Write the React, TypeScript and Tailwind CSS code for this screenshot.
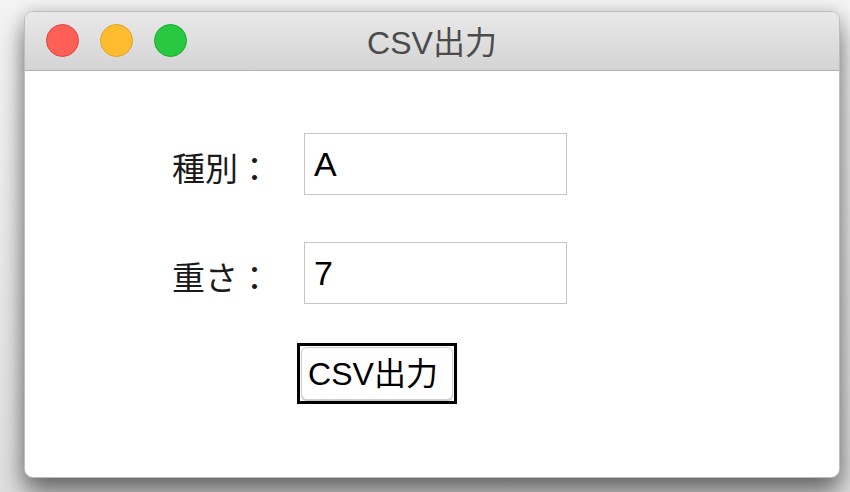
import React from "react";

const font = { fontFamily: '"Liberation Sans", "Noto Sans CJK JP", sans-serif' };

export default function App() {
  return (
    <div
      className="w-[850px] h-[492px] bg-[linear-gradient(to_bottom,#f4f4f4,#e0e0e0)] pt-[11px] pl-[24px] overflow-hidden"
      style={font}
    >
      <div className="w-[816px] h-[467px] bg-white rounded-[9px] border border-[#bdbdbd] shadow-[0_16px_26px_rgba(0,0,0,0.5),0_0_16px_rgba(0,0,0,0.15)] flex flex-col overflow-hidden">
        {/* Title bar */}
        <div className="relative h-[59px] shrink-0 bg-[linear-gradient(to_bottom,#e9e9e9,#d4d4d4)] border-b border-[#b3b3b3] flex items-center justify-center">
          <div className="absolute left-[21px] top-[12px] flex gap-[21px]">
            <div className="w-[33px] h-[33px] rounded-full bg-[#fe5f57] border border-[#e0443e]" />
            <div className="w-[33px] h-[33px] rounded-full bg-[#febc2e] border border-[#dea123]" />
            <div className="w-[33px] h-[33px] rounded-full bg-[#28c840] border border-[#1aab29]" />
          </div>
          <span className="text-[32px] leading-none text-[#4b4b4b] mt-[3px]">CSV出力</span>
        </div>

        {/* Content */}
        <div className="flex flex-col pl-[147px] pt-[62px]">
          <div className="flex items-center">
            <span className="w-[132px] text-[33px] leading-none text-[#1a1a1a] pt-[10px]">種別：</span>
            <div className="w-[263px] h-[62px] border border-[#c6c6c6] flex items-center pl-[9px] text-[34px] text-black">
              A
            </div>
          </div>
          <div className="flex items-center mt-[47px]">
            <span className="w-[132px] text-[33px] leading-none text-[#1a1a1a] pt-[10px]">重さ：</span>
            <div className="w-[263px] h-[62px] border border-[#c6c6c6] flex items-center pl-[9px] text-[34px] text-black">
              7
            </div>
          </div>
          <div className="mt-[39px] ml-[125px]">
            <div className="inline-flex w-[160px] h-[61px] border-[3px] border-black p-[1px]">
              <div className="flex-1 rounded-[6px] bg-white border border-[#cfcfcf] shadow-[0_1px_1px_rgba(0,0,0,0.25)] flex items-center justify-center text-[32px] leading-none text-black pr-[8px]">
                CSV出力
              </div>
            </div>
          </div>
        </div>
      </div>
    </div>
  );
}
